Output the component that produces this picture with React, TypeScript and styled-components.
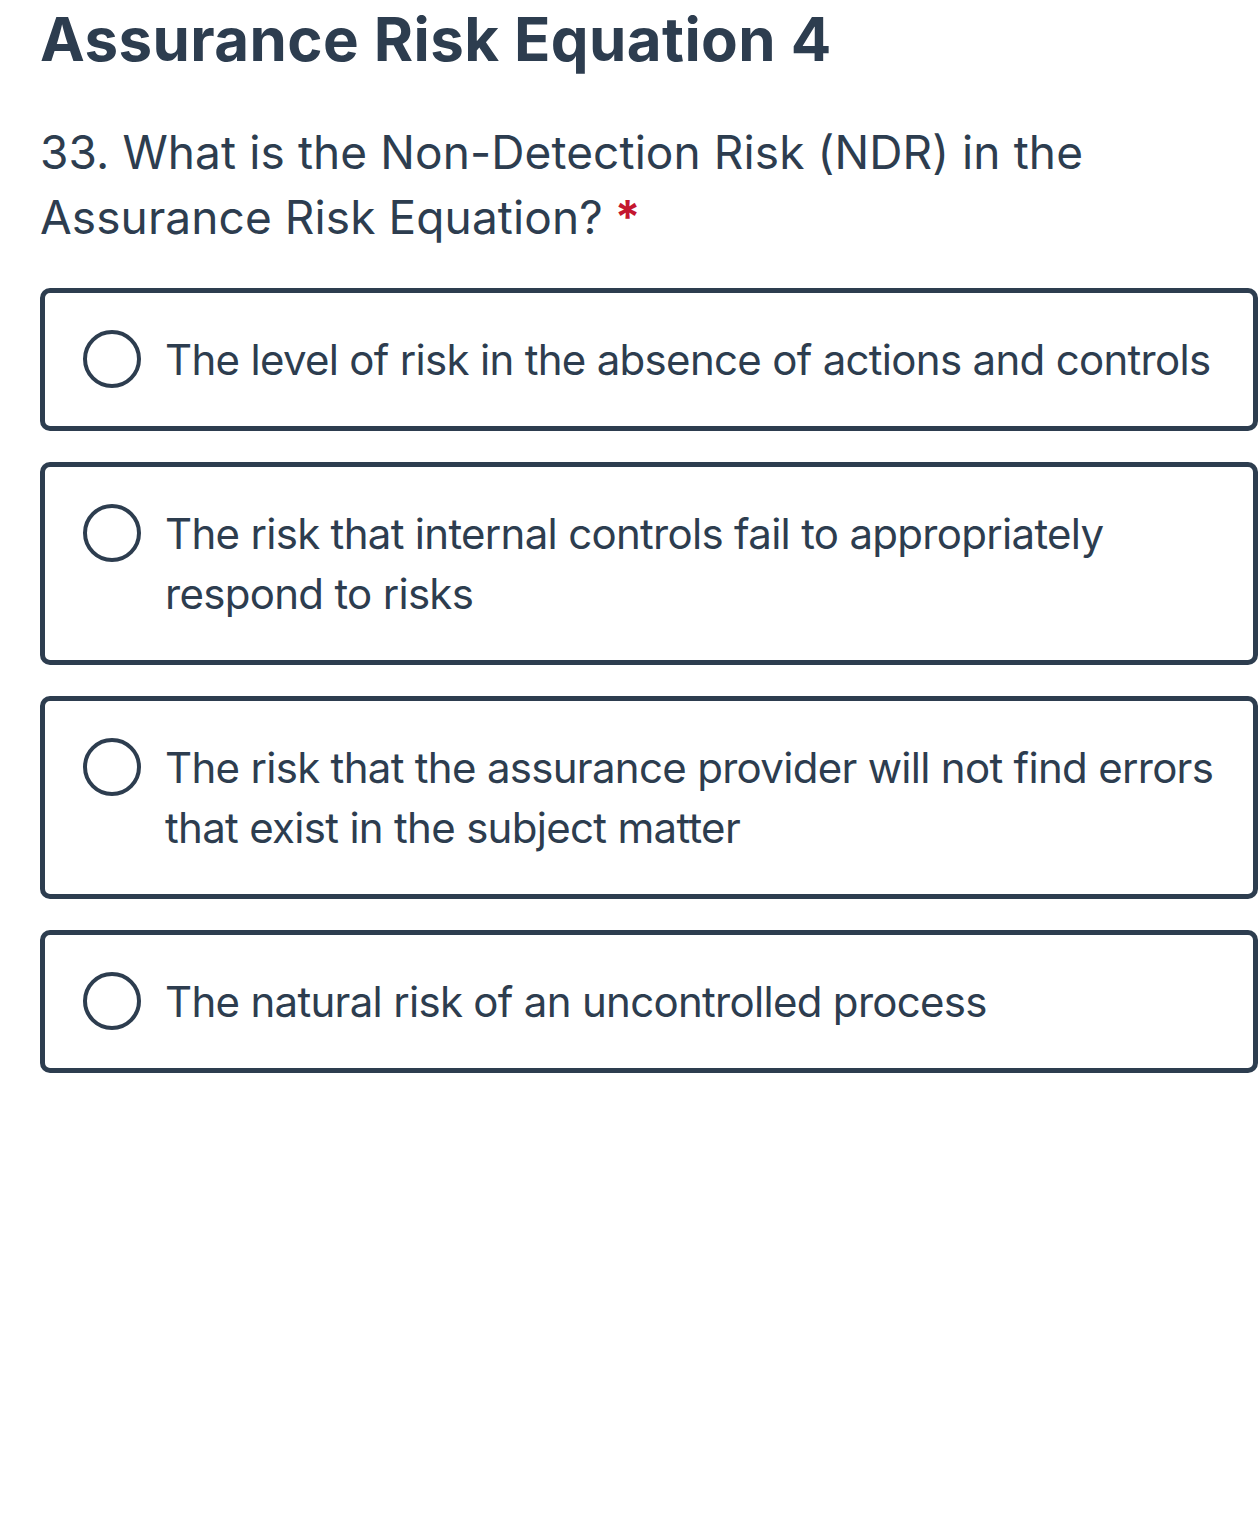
import styled, { createGlobalStyle } from 'styled-components'

const ink = '#2d3d4f'

const GlobalStyle = createGlobalStyle`
  html, body {
    margin: 0;
    padding: 0;
    background: #ffffff;
  }
  body {
    font-family: Inter, 'Noto Sans', 'Liberation Sans', sans-serif;
    color: ${ink};
    -webkit-font-smoothing: antialiased;
  }
`

const Page = styled.main`
  padding: 3px 0 0 40px;
  min-height: 1518px;
  box-sizing: border-box;
`

const Title = styled.h1`
  margin: 0;
  font-size: 60px;
  line-height: 72px;
  font-weight: 700;
  letter-spacing: 0.4px;
`

const Question = styled.h2`
  margin: 45px 0 0;
  font-size: 46px;
  line-height: 65px;
  font-weight: 400;
  letter-spacing: 0.1px;
  max-width: 1110px;
`

const Required = styled.span`
  display: inline-block;
  color: #c4162f;
  font-weight: 700;
  line-height: 40px;
  margin-left: 12px;
`

const Options = styled.div`
  margin-top: 38px;
  display: flex;
  flex-direction: column;
  gap: 31px;
`

const Option = styled.label`
  display: flex;
  align-items: flex-start;
  gap: 24px;
  padding: 36.5px 30px 36.5px 38px;
  border: 5px solid ${ink};
  border-radius: 10px;
  cursor: pointer;
`

const Radio = styled.span`
  flex-shrink: 0;
  width: 58px;
  height: 58px;
  box-sizing: border-box;
  border: 4.5px solid ${ink};
  border-radius: 50%;
`

const OptionText = styled.span`
  font-size: 42px;
  line-height: 60px;
  letter-spacing: -0.7px;
`

const answers = [
  'The level of risk in the absence of actions and controls',
  'The risk that internal controls fail to appropriately respond to risks',
  'The risk that the assurance provider will not find errors that exist in the subject matter',
  'The natural risk of an uncontrolled process',
]

export default function App() {
  return (
    <>
      <GlobalStyle />
      <Page>
        <Title>Assurance Risk Equation 4</Title>
        <Question>
          33. What is the Non-Detection Risk (NDR) in the Assurance Risk
          Equation?<Required>*</Required>
        </Question>
        <Options>
          {answers.map((a) => (
            <Option key={a}>
              <Radio />
              <OptionText>{a}</OptionText>
            </Option>
          ))}
        </Options>
      </Page>
    </>
  )
}
